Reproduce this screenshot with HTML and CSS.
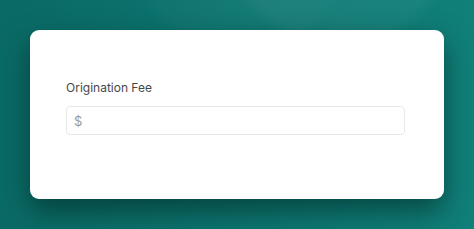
FILE: index.html
```html
<!DOCTYPE html>
<html>
<head>
<meta charset="utf-8">
<link rel="stylesheet" href="styles.css">
</head>
<body>
<div class="stage">
  <div class="card">
    <label class="label" for="fee">Origination Fee</label>
    <div class="field">
      <span class="prefix">$</span>
      <input id="fee" class="input" type="text">
    </div>
  </div>
</div>
</body>
</html>
```
FILE: styles.css
```css
html, body {
  margin: 0;
  padding: 0;
}
body {
  width: 474px;
  height: 229px;
  overflow: hidden;
  font-family: Inter, "Liberation Sans", sans-serif;
}
.stage {
  width: 474px;
  height: 229px;
  box-sizing: border-box;
  padding: 30px 30px 0 30px;
  background:
    radial-gradient(ellipse 120px 80px at 340px -25px, rgba(255,255,255,0.06), rgba(255,255,255,0.04) 75%, rgba(255,255,255,0) 90%),
    radial-gradient(ellipse 110px 60px at 240px -5px, rgba(255,255,255,0.04), rgba(255,255,255,0.02) 75%, rgba(255,255,255,0) 90%),
    linear-gradient(90deg, #0a6a65 0%, #0c736d 40%, #108079 100%);
}
.card {
  width: 414px;
  height: 169px;
  box-sizing: border-box;
  background: #ffffff;
  border-radius: 9px;
  padding: 50px 39px 0 36px;
  box-shadow: 0 12px 28px rgba(0, 30, 28, 0.55);
  display: flex;
  flex-direction: column;
}
.label {
  font-size: 12px;
  line-height: 15px;
  color: #474747;
  margin-bottom: 11px;
}
.field {
  height: 29px;
  box-sizing: border-box;
  border: 1px solid #e8e8e8;
  border-radius: 4px;
  display: flex;
  align-items: center;
  padding-left: 7px;
}
.prefix {
  font-size: 13px;
  color: #9c9c9c;
}
.input {
  border: none;
  outline: none;
  flex: 1;
  background: transparent;
  font: inherit;
}
```
